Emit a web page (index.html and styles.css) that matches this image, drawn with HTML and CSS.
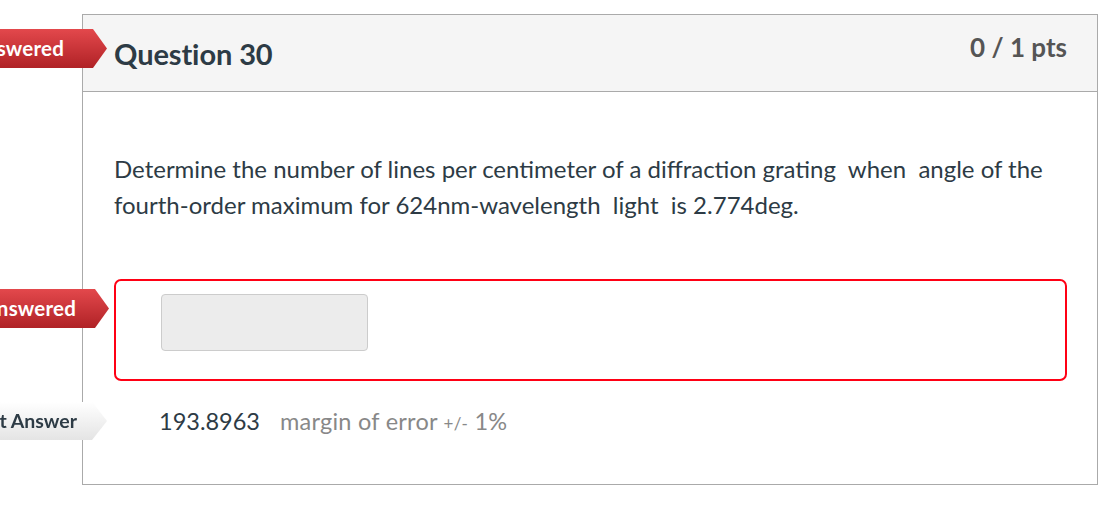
FILE: index.html
```html
<!DOCTYPE html>
<html lang="en">
<head>
    <meta charset="UTF-8">
    <title>Question 30</title>
    <link rel="stylesheet" href="styles.css">
</head>
<body>
    <div class="question">
        <div class="header">
            <span class="flag flag-red flag-top">Unanswered</span>
            <h2 class="title">Question 30</h2>
            <div class="points">0 / 1 pts</div>
        </div>
        <div class="content">
            <p class="text">Determine the number of lines per centimeter of a diffraction grating&nbsp; when&nbsp; angle of the fourth-order maximum for 624nm-wavelength&nbsp; light&nbsp; is 2.774deg.</p>
            <div class="answer">
                <span class="flag flag-red flag-answer">Unanswered</span>
                <input class="answer-input" type="text" disabled>
            </div>
            <div class="correct">
                <span class="flag flag-plain">Correct Answer</span>
                <span class="value">193.8963</span>
                <span class="margin">margin of error <small>+/-</small> 1%</span>
            </div>
        </div>
    </div>
</body>
</html>
```

FILE: styles.css
```css
body {
    margin: 0;
    background: #fff;
    font-family: Lato, "Open Sans", sans-serif;
    color: #2d3b45;
}
.question {
    margin: 14px 0 0 82px;
    width: 1014px;
    height: 469px;
    border: 1px solid #aaaaaa;
}
.header {
    position: relative;
    display: flex;
    justify-content: space-between;
    height: 76px;
    background: #f5f5f5;
    border-bottom: 1px solid #aaaaaa;
    padding: 0 30px 0 31px;
}
.title {
    margin: 0;
    padding-top: 21px;
    font-size: 29px;
    font-weight: bold;
    letter-spacing: -0.1px;
}
.points {
    padding-top: 16px;
    font-size: 26px;
    font-weight: bold;
    color: #555;
}
.content {
    padding: 59px 30px 0 31px;
}
.text {
    margin: 0;
    font-size: 24px;
    line-height: 36px;
}
.answer {
    position: relative;
    height: 98px;
    margin-top: 56px;
    border: 2px solid #ff0014;
    border-radius: 7px;
}
.answer-input {
    display: block;
    box-sizing: border-box;
    width: 207px;
    height: 57px;
    margin: 13px 0 0 45px;
    background: #ececec;
    border: 1px solid #cccccc;
    border-radius: 4px;
}
.correct {
    position: relative;
    display: flex;
    align-items: baseline;
    gap: 20px;
    margin-top: 26px;
    padding-left: 45px;
    font-size: 23.5px;
}
.margin {
    color: #888;
    letter-spacing: 0.25px;
}
.margin small {
    font-size: 17px;
}
.flag {
    position: absolute;
    box-sizing: border-box;
    height: 39px;
    width: 220px;
    text-align: right;
    font-size: 20.5px;
    font-weight: bold;
    letter-spacing: 0.2px;
    line-height: 38px;
}
.flag-red {
    color: #fff;
    background: linear-gradient(#e3484c, #b02226);
}
.flag-top {
    left: -196px;
    top: 14px;
    padding-right: 43px;
    clip-path: polygon(0 0, 206px 0, 220px 50%, 206px 100%, 0 100%);
}
.flag-answer {
    left: -226px;
    top: 8px;
    padding-right: 34px;
    clip-path: polygon(0 0, 205px 0, 219px 50%, 205px 100%, 0 100%);
}
.flag-plain {
    left: -228px;
    top: -5px;
    height: 38px;
    width: 222px;
    padding-right: 31px;
    font-size: 19.5px;
    letter-spacing: 0;
    color: #2d3b45;
    background: linear-gradient(#ffffff, #e4e4e4);
    clip-path: polygon(0 0, 206px 0, 221px 50%, 206px 100%, 0 100%);
    filter: drop-shadow(0 0 0.8px #888);
}
```
